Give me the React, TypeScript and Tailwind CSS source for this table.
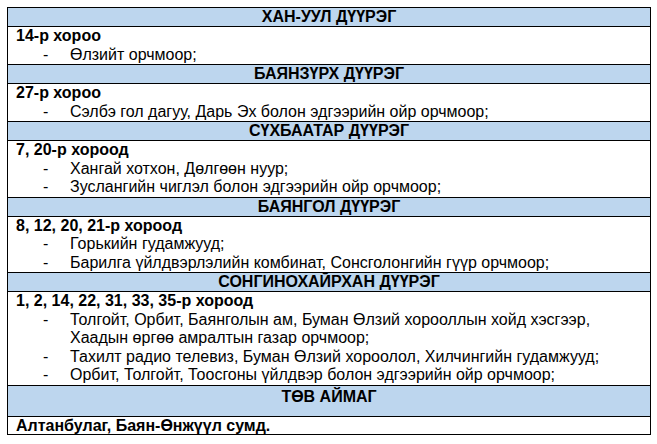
const font = { fontFamily: '"Liberation Sans", Arial, sans-serif' }

type Section = {
  title: string
  label: string
  items: string[][]
}

const sections: Section[] = [
  { title: "ХАН-УУЛ ДҮҮРЭГ", label: "14-р хороо", items: [["Өлзийт орчмоор;"]] },
  {
    title: "БАЯНЗҮРХ ДҮҮРЭГ",
    label: "27-р хороо",
    items: [["Сэлбэ гол дагуу, Дарь Эх болон эдгээрийн ойр орчмоор;"]],
  },
  {
    title: "СҮХБААТАР ДҮҮРЭГ",
    label: "7, 20-р хороод",
    items: [["Хангай хотхон, Дөлгөөн нуур;"], ["Зуслангийн чиглэл болон эдгээрийн ойр орчмоор;"]],
  },
  {
    title: "БАЯНГОЛ ДҮҮРЭГ",
    label: "8, 12, 20, 21-р хороод",
    items: [["Горькийн гудамжууд;"], ["Барилга үйлдвэрлэлийн комбинат, Сонсголонгийн гүүр орчмоор;"]],
  },
  {
    title: "СОНГИНОХАЙРХАН ДҮҮРЭГ",
    label: "1, 2, 14, 22, 31, 33, 35-р хороод",
    items: [
      ["Толгойт, Орбит, Баянголын ам, Буман Өлзий хорооллын хойд хэсгээр,", "Хаадын өргөө амралтын газар орчмоор;"],
      ["Тахилт радио телевиз, Буман Өлзий хороолол, Хилчингийн гудамжууд;"],
      ["Орбит, Толгойт, Тоосгоны үйлдвэр болон эдгээрийн ойр орчмоор;"],
    ],
  },
]

function Header({ title, tall }: { title: string; tall?: boolean }) {
  return (
    <div
      className={
        "bg-[#bdd6ee] border-t border-black text-center font-bold text-black " +
        (tall ? "h-[31px] leading-[22px]" : "h-[19px] leading-[18px]")
      }
    >
      {title}
    </div>
  )
}

export default function App() {
  return (
    <div className="w-[657px] h-[444px] bg-white pt-[7px] pl-[7px] text-[16px] text-black overflow-hidden" style={font}>
      <div className="w-[644px] border border-black border-t-0">
        {sections.map((s, i) => (
          <div key={i}>
            <Header title={s.title} />
            <div className="border-t border-black pl-[8px] leading-[18.5px]">
              <div className="font-bold">{s.label}</div>
              {s.items.map((lines, j) => (
                <div key={j} className="flex">
                  <div className="w-[54px] shrink-0 pl-[27px]">-</div>
                  <div>
                    {lines.map((l, k) => (
                      <div key={k}>{l}</div>
                    ))}
                  </div>
                </div>
              ))}
            </div>
          </div>
        ))}
        <Header title="ТӨВ АЙМАГ" tall />
        <div className="border-t border-black pl-[8px] h-[18px] leading-[17px] font-bold">
          Алтанбулаг, Баян-Өнжүүл сумд.
        </div>
      </div>
    </div>
  )
}
